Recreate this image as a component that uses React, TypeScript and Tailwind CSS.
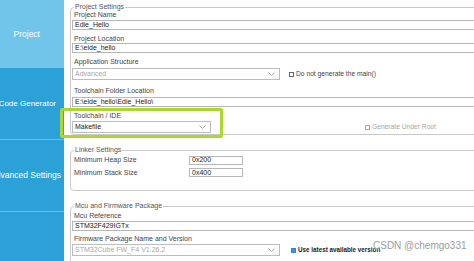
const font = "font-['Liberation_Sans',Arial,sans-serif]";

function Chevron() {
  return (
    <svg width="7" height="4" viewBox="0 0 7 4" className="shrink-0">
      <polyline points="0.5,0.5 3.5,3.3 6.5,0.5" fill="none" stroke="#8e8e8e" strokeWidth="0.8" />
    </svg>
  );
}

function TextBox({ value, muted }: { value: string; muted?: boolean }) {
  return (
    <div
      className={`flex h-[10px] w-full items-center border border-[#b7b7b7] bg-white pl-[2px] text-[7px] leading-[8px] ${muted ? 'text-[#a8a8a8]' : 'text-[#222]'}`}
    >
      {value}
    </div>
  );
}

function Select({ value, width, muted }: { value: string; width: string; muted?: boolean }) {
  return (
    <div
      className={`flex h-[12px] shrink-0 items-center justify-between border border-[#bdbdbd] bg-white pl-[2px] pr-[4px] text-[7px] leading-[8px] ${width} ${muted ? 'text-[#a8a8a8]' : 'text-[#222]'}`}
    >
      <span>{value}</span>
      <Chevron />
    </div>
  );
}

function Label({ children, className = '' }: { children: string; className?: string }) {
  return <div className={`ml-[2px] h-[8px] text-[7px] leading-[8px] text-[#444] ${className}`}>{children}</div>;
}

function Check({ label, state, className = '' }: { label: string; state: 'off' | 'disabled' | 'on'; className?: string }) {
  const box =
    state === 'on'
      ? 'border-[#2f86cf] bg-[#3a96dc]'
      : state === 'disabled'
        ? 'border-[#a8a8a8] bg-white'
        : 'border-[#666] bg-white';
  const text =
    state === 'on'
      ? 'font-bold text-[#222] text-[6.3px]'
      : state === 'disabled'
        ? 'text-[#a6a6a6] text-[6.7px]'
        : 'text-[#444] text-[6.7px]';
  return (
    <div className={`flex items-center ${className}`}>
      <span className={`h-[5px] w-[5px] border ${box}`} />
      <span className={`ml-[2px] whitespace-nowrap leading-[8px] ${text}`}>{label}</span>
    </div>
  );
}

function Group({ title, className = '', children }: { title: string; className?: string; children: React.ReactNode }) {
  return (
    <fieldset className={`w-[420px] rounded-[4px] border border-[#c9c9c9] pl-[1px] ${className}`}>
      <legend className="ml-[2px] px-[1px] text-[7px] leading-[8px] text-[#555]">{title}</legend>
      {children}
    </fieldset>
  );
}

function Tab({ label, className }: { label: string; className: string }) {
  return (
    <div className={`flex items-center justify-end overflow-hidden whitespace-nowrap text-white ${className}`}>
      {label}
    </div>
  );
}

export default function App() {
  return (
    <div className={`relative flex h-[261px] w-[474px] overflow-hidden bg-white ${font}`}>
      {/* side tabs, cut at the left edge as in the window */}
      <div className="flex w-[64px] shrink-0 flex-col bg-[#2ca1d8]">
        <Tab label="Project" className="h-[68px] bg-[#71c4ea] pr-[24px] text-[8.5px]" />
        <Tab label="Code Generator" className="h-[72px] border-b border-[#6cc0e8] pr-[8px] text-[8px]" />
        <Tab label="Advanced Settings" className="h-[72px] border-b border-[#6cc0e8] pr-[3px] text-[8.5px]" />
        <div className="flex-1" />
      </div>

      <div className="min-w-0 flex-1 overflow-hidden pl-[6px]">
        <Group title="Project Settings" className="mt-[3px] pb-[1px]">
          <Label>Project Name</Label>
          <div className="mt-[1px]">
            <TextBox value="Edie_Hello" />
          </div>
          <Label className="mt-[5px]">Project Location</Label>
          <TextBox value="E:\eide_hello" />
          <Label className="mt-[5px]">Application Structure</Label>
          <div className="mt-[2px] flex items-center">
            <Select value="Advanced" width="w-[208px]" muted />
            <Check label="Do not generate the main()" state="off" className="ml-[9px]" />
          </div>
          <Label className="mt-[7px]">Toolchain Folder Location</Label>
          <div className="mt-[2px]">
            <TextBox value="E:\eide_hello\Edie_Hello\" />
          </div>
          <Label className="mt-[5px]">Toolchain / IDE</Label>
          <div className="mt-[1px] flex items-center">
            <Select value="Makefile" width="w-[139px]" />
            <Check label="Generate Under Root" state="disabled" className="ml-[154px]" />
          </div>
        </Group>

        <Group title="Linker Settings" className="mt-[11px] pb-[12px]">
          <div className="mt-[1px] flex items-center">
            <span className="ml-[2px] w-[115px] text-[7px] text-[#444]">Minimum Heap Size</span>
            <div className="flex h-[9px] w-[54px] items-center border border-[#b7b7b7] pl-[2px] text-[7px] text-[#222]">0x200</div>
          </div>
          <div className="mt-[2px] flex items-center">
            <span className="ml-[2px] w-[115px] text-[7px] text-[#444]">Minimum Stack Size</span>
            <div className="flex h-[9px] w-[54px] items-center border border-[#b7b7b7] pl-[2px] text-[7px] text-[#222]">0x400</div>
          </div>
        </Group>

        <Group title="Mcu and Firmware Package" className="mt-[11px] pb-[20px]">
          <Label className="mt-[2px]">Mcu Reference</Label>
          <div className="mt-[1px]">
            <TextBox value="STM32F429IGTx" />
          </div>
          <Label className="mt-[4px]">Firmware Package Name and Version</Label>
          <div className="mt-[1px] flex items-center">
            <Select value="STM32Cube FW_F4 V1.26.2" width="w-[208px]" muted />
            <Check label="Use latest available version" state="on" className="ml-[11px]" />
          </div>
        </Group>
      </div>

      {/* highlight box and watermark drawn over the form */}
      <div className="pointer-events-none absolute left-[60px] top-[108px] h-[30px] w-[163px] rounded-[2px] border-[3px] border-[#a9d82e]" />
      <div className="pointer-events-none absolute left-[373px] top-[240px] text-[10px] leading-[12px] text-[#9c9c9c] [text-shadow:0_0_1px_#ffffff]">
        CSDN @chemgo331
      </div>
    </div>
  );
}
